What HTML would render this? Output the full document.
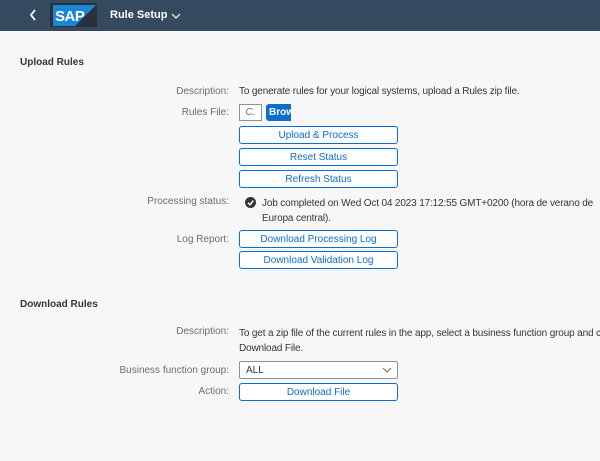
<!DOCTYPE html>
<html><head><meta charset="utf-8"><style>
*{margin:0;padding:0;box-sizing:border-box}
body{width:600px;height:461px;overflow:hidden;background:#f7f7f7;font-family:"Liberation Sans",sans-serif;font-size:10px;color:#32363a;position:relative}
.hdr{position:absolute;left:0;top:0;width:600px;height:31px;background:#354a5f}
.a{position:absolute;white-space:nowrap}
.lbl{position:absolute;right:371px;color:#6a6d70;white-space:nowrap}
.btn{position:absolute;left:239px;width:159px;height:18px;border:1px solid #0a6ed1;border-radius:3px;background:#fff;color:#0a6ed1;text-align:center;line-height:17px;font-size:10px}
h2{position:absolute;left:20px;font-size:10px;font-weight:bold;color:#32363a}
.t{letter-spacing:-0.15px}
</style></head><body>
<div class="hdr"></div>
<svg class="a" style="left:29px;top:9px" width="8" height="12"><polyline points="6,1 2,6 6,11" fill="none" stroke="#fff" stroke-width="1.8"/></svg>
<div class="a" style="left:50px;top:3px;width:47px;height:24px;background:#29313a;border-radius:2px"></div>
<svg class="a" style="left:53px;top:5px" width="43" height="21" viewBox="0 0 43 21"><polygon points="0,0 43,0 22,21 0,21" fill="#1a86d6"/><text x="2" y="16" fill="#fff" font-family="Liberation Sans" font-weight="bold" font-size="15" letter-spacing="-0.5">SAP</text></svg>
<div class="a" style="left:110px;top:9px;color:#fff;font-size:11px;font-weight:bold">Rule Setup</div>
<svg class="a" style="left:171px;top:13px" width="10" height="7"><polyline points="1,1 5,5 9,1" fill="none" stroke="#fff" stroke-width="1.2"/></svg>

<h2 style="top:57px">Upload Rules</h2>
<div class="lbl" style="top:86px">Description:</div>
<div class="a t" style="left:239px;top:86px">To generate rules for your logical systems, upload a Rules zip file.</div>
<div class="lbl" style="top:107px">Rules File:</div>
<div class="a" style="left:239px;top:104px;width:23px;height:17px;border:1px solid #89919a;background:#fff;color:#6a6d70;font-style:italic;text-align:center;line-height:15px">C.</div>
<div class="a" style="left:266px;top:104px;width:25px;height:17px;background:#0a6ed1;border-radius:3px 0 0 3px;color:#fff;font-weight:bold;line-height:17px;padding-left:3px;overflow:hidden">Brow</div>
<div class="btn" style="top:126px">Upload &amp; Process</div>
<div class="btn" style="top:148px">Reset Status</div>
<div class="btn" style="top:170px">Refresh Status</div>
<div class="lbl" style="top:196px">Processing status:</div>
<svg class="a" style="left:245px;top:197px" width="11" height="11"><circle cx="5.5" cy="5.5" r="5.5" fill="#32363a"/><polyline points="3,5.8 5,7.8 8.3,3.6" fill="none" stroke="#fff" stroke-width="1.5"/></svg>
<div class="a t" style="left:262px;top:196px;line-height:15px">Job completed on Wed Oct 04 2023 17:12:55 GMT+0200 (hora de verano de<br>Europa central).</div>
<div class="lbl" style="top:234px">Log Report:</div>
<div class="btn" style="top:230px">Download Processing Log</div>
<div class="btn" style="top:251px">Download Validation Log</div>

<h2 style="top:299px">Download Rules</h2>
<div class="lbl" style="top:326px">Description:</div>
<div class="a t" style="left:239px;top:326px;line-height:15px">To get a zip file of the current rules in the app, select a business function group and c<br>Download File.</div>
<div class="lbl" style="top:365px">Business function group:</div>
<div class="a" style="left:239px;top:361px;width:159px;height:18px;border:1px solid #89919a;border-radius:2px;background:#fff;padding-left:6px;line-height:17px">ALL</div>
<svg class="a" style="left:382px;top:367px" width="10" height="6"><polyline points="1,1 5,5 9,1" fill="none" stroke="#6a6d70" stroke-width="1"/></svg>
<div class="lbl" style="top:386px">Action:</div>
<div class="btn" style="top:383px">Download File</div>
</body></html>
